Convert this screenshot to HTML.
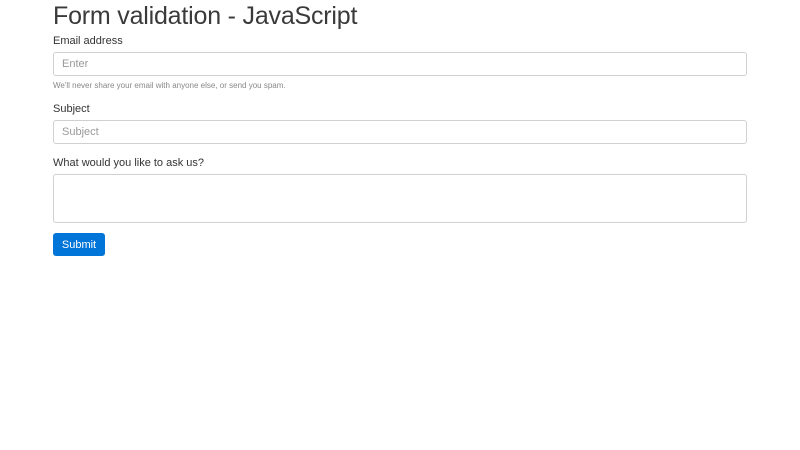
<!DOCTYPE html>
<html><head><style>
body{margin:0;width:800px;height:450px;background:#fff;font-family:"Liberation Sans",sans-serif;color:#292b2c;position:relative;overflow:hidden}
.a{position:absolute;white-space:nowrap}
h1{position:absolute;left:53px;top:1px;margin:0;font-weight:normal;font-size:25px;line-height:30px;color:#3a3a3a;letter-spacing:-0.2px}
.l{font-size:11px;color:#333}
.i{position:absolute;left:53px;width:694px;border:1px solid #d0d0d0;border-radius:3px;background:#fff;box-sizing:border-box}
.p{font-size:11px;color:#999;padding-left:8px}
.s{font-size:8px;color:#888}
.b{position:absolute;left:53px;top:233px;width:52px;height:23px;background:#0275d8;border-radius:3px;color:#fff;font-size:11px;line-height:24px;text-align:center}
</style></head><body>
<h1>Form validation - JavaScript</h1>
<div class="a l" style="left:53px;top:35px">Email address</div>
<div class="i p" style="top:52px;height:24px;line-height:23px">Enter</div>
<div class="a s" style="left:53px;top:81px">We'll never share your email with anyone else, or send you spam.</div>
<div class="a l" style="left:53px;top:103px">Subject</div>
<div class="i p" style="top:120px;height:24px;line-height:23px">Subject</div>
<div class="a l" style="left:53px;top:157px">What would you like to ask us?</div>
<div class="i" style="top:174px;height:49px"></div>
<div class="b">Submit</div>
</body></html>
